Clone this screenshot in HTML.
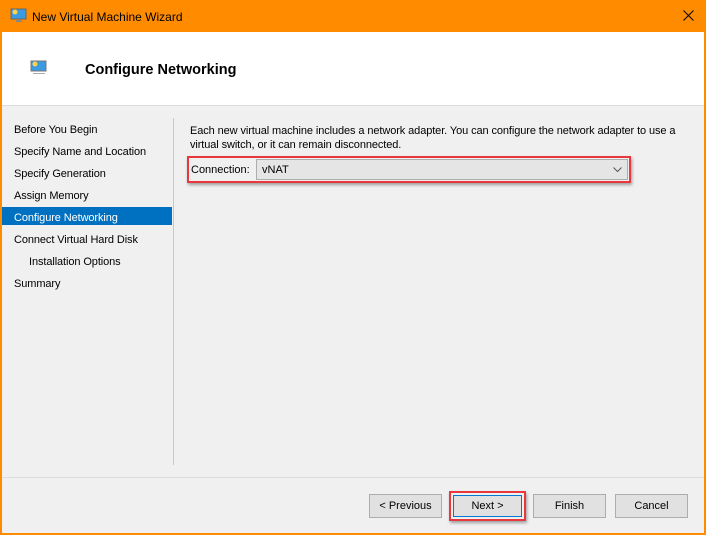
<!DOCTYPE html>
<html><head><meta charset="utf-8"><style>
*{margin:0;padding:0;box-sizing:border-box}
body{width:706px;height:535px;overflow:hidden;font-family:"Liberation Sans",sans-serif;font-size:11px;color:#000;background:#ff8c00}
.win{position:absolute;left:2px;top:0;width:702px;height:533px;background:#f0f0f0}
.title{position:absolute;left:0;top:0;width:702px;height:32px;background:#ff8c00}
.title span{position:absolute;left:30px;top:10px;font-size:12px}
.head{position:absolute;left:0;top:32px;width:702px;height:74px;background:#fff;border-bottom:1px solid #dcdcdc}
.head h1{position:absolute;left:83px;top:30px;font-size:14.5px;font-weight:bold}
.nav div{position:absolute;left:12px;font-size:11px;letter-spacing:-0.1px}
.sel{position:absolute;left:0;top:207px;width:170px;height:18px;background:#0070c0}
.vd{position:absolute;left:171px;top:118px;width:1px;height:347px;background:#c8c8c8}
.bd{position:absolute;left:0;top:477px;width:702px;height:1px;background:#dcdcdc}
.btn{position:absolute;top:494px;height:24px;border:1px solid #adadad;background:#e1e1e1;text-align:center;line-height:22px;font-size:11px}
</style></head><body>
<div class="win">
<div class="title">
<svg style="position:absolute;left:8px;top:8px" width="18" height="16"><rect x="1" y="1" width="15" height="10" fill="#3a9be0" stroke="#666" stroke-width="1"/><circle cx="5" cy="4" r="2.5" fill="#ffd24a"/><rect x="6" y="12" width="6" height="2" fill="#888"/></svg>
<span>New Virtual Machine Wizard</span>
<svg style="position:absolute;left:681px;top:10px" width="11" height="11"><path d="M0.5 0.5L10.5 10.5M10.5 0.5L0.5 10.5" stroke="#000" stroke-width="1"/></svg></div>
<div class="head">
<svg style="position:absolute;left:28px;top:28px" width="18" height="16"><rect x="1" y="1" width="15" height="10" fill="#3a9be0" stroke="#777" stroke-width="1"/><circle cx="5" cy="4" r="2.5" fill="#ffd24a"/><rect x="3" y="13" width="12" height="1" fill="#aaa"/></svg>
<h1>Configure Networking</h1></div>
<div class="sel"></div>
<div class="nav">
<div style="top:124px">Before You Begin</div>
<div style="top:146px">Specify Name and Location</div>
<div style="top:168px">Specify Generation</div>
<div style="top:190px">Assign Memory</div>
<div style="top:212px;color:#fff">Configure Networking</div>
<div style="top:234px">Connect Virtual Hard Disk</div>
<div style="top:256px;left:27px">Installation Options</div>
<div style="top:278px">Summary</div>
</div>
<div class="vd"></div>
<div style="position:absolute;left:188px;top:124px;width:500px;line-height:14px;letter-spacing:-0.1px">Each new virtual machine includes a network adapter. You can configure the network adapter to use a virtual switch, or it can remain disconnected.</div>
<div style="position:absolute;left:185px;top:156px;width:444px;height:27px;border:2px solid #e8383d;box-shadow:1px 2px 3px rgba(0,0,0,.35)"></div>
<div style="position:absolute;left:189px;top:164px">Connection:</div>
<div style="position:absolute;left:254px;top:159px;width:372px;height:21px;border:1px solid #adadad;background:#e5e5e5">
<span style="position:absolute;left:5px;top:4px">vNAT</span>
<svg style="position:absolute;right:5px;top:7px" width="9" height="6"><path d="M0.5 0.5 L4.5 4.5 L8.5 0.5" fill="none" stroke="#555"/></svg></div>
<div class="bd"></div>
<div class="btn" style="left:367px;width:73px">&lt; Previous</div>
<div style="position:absolute;left:447px;top:491px;width:77px;height:30px;border:2px solid #e8383d;box-shadow:1px 2px 3px rgba(0,0,0,.35)"></div>
<div class="btn" style="left:451px;width:69px;height:22px;top:495px;border:1px solid #0078d7;line-height:20px">Next &gt;</div>
<div class="btn" style="left:531px;width:73px">Finish</div>
<div class="btn" style="left:613px;width:73px">Cancel</div>
</div>
</body></html>
